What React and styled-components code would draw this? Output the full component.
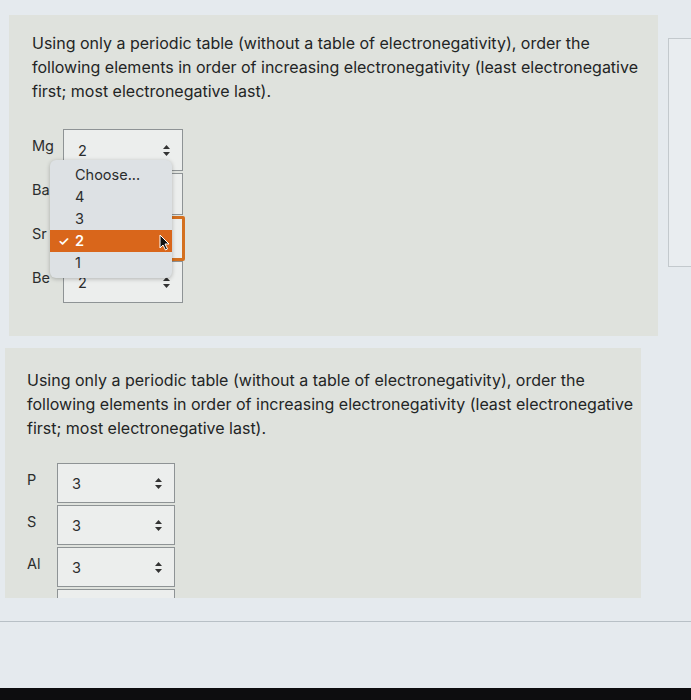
import React from 'react';
import styled, { createGlobalStyle } from 'styled-components';

const Global = createGlobalStyle`
  html, body { margin: 0; padding: 0; }
  body {
    background: #e5eaee;
    font-family: "Inter", "Liberation Sans", Arial, sans-serif;
    color: #262828;
  }
`;

const Page = styled.div`
  width: 691px;
  height: 700px;
  overflow: hidden;
  display: flex;
  flex-direction: column;
  background: #e5eaee;
`;

const TopRow = styled.div`
  display: flex;
  align-items: flex-start;
  padding: 15px 0 0 9px;
  gap: 10px;
`;

const Panel = styled.div`
  position: relative;
  background: #dfe2dd;
  width: ${p => p.$w}px;
  height: ${p => p.$h}px;
  padding: ${p => p.$pad};
  box-sizing: border-box;
  overflow: ${p => (p.$clip ? 'hidden' : 'visible')};
`;

const LowerPanel = styled(Panel)`
  margin: 12px 0 0 5px;
`;

const SideFrame = styled.div`
  margin-top: 23px;
  width: 30px;
  height: 227px;
  border: 1px solid #c3c9cd;
  border-right: none;
  background: #e9edf0;
`;

const Question = styled.p`
  margin: 0;
  font-size: 16px;
  line-height: 24px;
  white-space: nowrap;
  color: #232525;
`;

const Rows = styled.div`
  margin-top: ${p => p.$top}px;
  display: flex;
  flex-direction: column;
  gap: 2px;
`;

const Row = styled.div`
  display: flex;
  align-items: flex-start;
`;

const Label = styled.div`
  width: ${p => p.$w}px;
  padding-top: 8px;
  font-size: 14.5px;
  color: #2b2d2d;
`;

const SelectBox = styled.div`
  position: relative;
  width: ${p => p.$w}px;
  height: ${p => p.$h}px;
  box-sizing: border-box;
  border: 1px solid #8e9395;
  background: #eceeed;
  display: flex;
  align-items: center;
  justify-content: space-between;
  padding: 0 12px 0 14px;
  font-size: 14.5px;
  color: #2b2d2d;
`;

const FocusRing = styled.div`
  position: absolute;
  inset: -2px -3px -3px -3px;
  border: 3px solid #d4701f;
  border-radius: 2px;
  pointer-events: none;
`;

const Menu = styled.div`
  position: absolute;
  left: 41px;
  top: 145px;
  width: 122px;
  padding: 4px 0;
  background: #dde1e4;
  border-radius: 6px;
  box-shadow: 0 1px 4px rgba(0, 0, 0, 0.25);
  z-index: 3;
  font-size: 14.5px;
`;

const MenuItem = styled.div`
  position: relative;
  height: 22px;
  line-height: 22px;
  padding-left: 25px;
  color: ${p => (p.$active ? '#ffffff' : '#2b2d2d')};
  background: ${p => (p.$active ? '#d9661b' : 'transparent')};
  font-weight: ${p => (p.$active ? 600 : 400)};
`;

const Check = styled.span`
  position: absolute;
  left: 8px;
  top: 0;
  font-size: 13px;
`;

const Cursor = styled.svg`
  position: absolute;
  right: 2px;
  top: 4px;
`;

const Divider = styled.div`
  margin-top: 23px;
  height: 1px;
  background: #b8c0c6;
`;

const BottomBar = styled.div`
  margin-top: auto;
  height: 12px;
  background: #0d0d0f;
`;

const Arrows = () => (
  <svg width="7" height="11" viewBox="0 0 7 11">
    <path d="M3.5 0 L7 4 L0 4 Z" fill="#333" />
    <path d="M3.5 11 L7 7 L0 7 Z" fill="#333" />
  </svg>
);

const Select = ({ value, w, h, focus }) => (
  <SelectBox $w={w} $h={h}>
    <span>{value}</span>
    <Arrows />
    {focus && <FocusRing />}
  </SelectBox>
);

const QuestionText = () => (
  <Question>
    Using only a periodic table (without a table of electronegativity), order the
    <br />
    following elements in order of increasing electronegativity (least electronegative
    <br />
    first; most electronegative last).
  </Question>
);

const first = [
  { el: 'Mg', v: '2' },
  { el: 'Ba', v: '4' },
  { el: 'Sr', v: '2', focus: true },
  { el: 'Be', v: '2' },
];

const second = [
  { el: 'P', v: '3' },
  { el: 'S', v: '3' },
  { el: 'Al', v: '3' },
  { el: '', v: '' },
];

export default function App() {
  return (
    <Page>
      <Global />
      <TopRow>
        <Panel $w={654} $h={321} $pad="16px 20px 0 23px">
          <QuestionText />
          <Rows $top={26}>
            {first.map(r => (
              <Row key={r.el}>
                <Label $w={31}>{r.el}</Label>
                <Select value={r.v} w={120} h={42} focus={r.focus} />
              </Row>
            ))}
          </Rows>
          <Menu>
            {['Choose...', '4', '3', '2', '1'].map(o => (
              <MenuItem key={o} $active={o === '2'}>
                {o === '2' && <Check>✓</Check>}
                {o}
                {o === '2' && (
                  <Cursor width="11" height="17" viewBox="0 0 11 17">
                    <path d="M1 1 L1 14 L4 11 L6.5 16 L8.5 15 L6 10 L10 10 Z" fill="#111" stroke="#fff" strokeWidth="1" />
                  </Cursor>
                )}
              </MenuItem>
            ))}
          </Menu>
        </Panel>
        <SideFrame />
      </TopRow>
      <LowerPanel $w={636} $h={250} $pad="20px 10px 0 22px" $clip>
        <QuestionText />
        <Rows $top={23}>
          {second.map((r, i) => (
            <Row key={i}>
              <Label $w={30}>{r.el}</Label>
              <Select value={r.v} w={118} h={40} />
            </Row>
          ))}
        </Rows>
      </LowerPanel>
      <Divider />
      <BottomBar />
    </Page>
  );
}
